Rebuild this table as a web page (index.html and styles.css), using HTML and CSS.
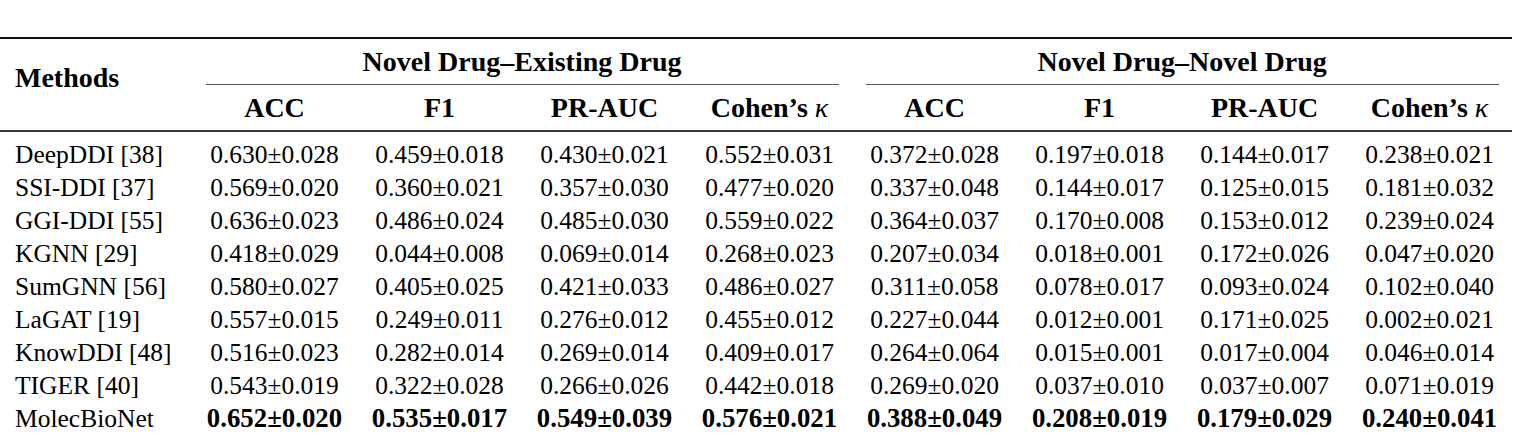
FILE: index.html
```html
<!DOCTYPE html>
<html lang="en">
<head>
<meta charset="utf-8">
<title>Results table</title>
<link rel="stylesheet" href="styles.css">
</head>
<body>
<div class="table-wrap">
<table class="results">
  <colgroup>
    <col class="col-method">
    <col class="col-num"><col class="col-num"><col class="col-num"><col class="col-num">
    <col class="col-num"><col class="col-num"><col class="col-num"><col class="col-num">
  </colgroup>
  <thead>
    <tr class="group-row">
      <th class="methods" rowspan="2">Methods</th>
      <th class="group" colspan="4"><div class="group-label">Novel Drug–Existing Drug</div></th>
      <th class="group" colspan="4"><div class="group-label">Novel Drug–Novel Drug</div></th>
    </tr>
    <tr class="metric-row">
      <th>ACC</th><th>F1</th><th>PR-AUC</th><th>Cohen’s <span class="kappa">κ</span></th>
      <th>ACC</th><th>F1</th><th>PR-AUC</th><th>Cohen’s <span class="kappa">κ</span></th>
    </tr>
  </thead>
  <tbody>
    <tr><td class="name">DeepDDI [38]</td><td>0.630±0.028</td><td>0.459±0.018</td><td>0.430±0.021</td><td>0.552±0.031</td><td>0.372±0.028</td><td>0.197±0.018</td><td>0.144±0.017</td><td>0.238±0.021</td></tr>
    <tr><td class="name">SSI-DDI [37]</td><td>0.569±0.020</td><td>0.360±0.021</td><td>0.357±0.030</td><td>0.477±0.020</td><td>0.337±0.048</td><td>0.144±0.017</td><td>0.125±0.015</td><td>0.181±0.032</td></tr>
    <tr><td class="name">GGI-DDI [55]</td><td>0.636±0.023</td><td>0.486±0.024</td><td>0.485±0.030</td><td>0.559±0.022</td><td>0.364±0.037</td><td>0.170±0.008</td><td>0.153±0.012</td><td>0.239±0.024</td></tr>
    <tr><td class="name">KGNN [29]</td><td>0.418±0.029</td><td>0.044±0.008</td><td>0.069±0.014</td><td>0.268±0.023</td><td>0.207±0.034</td><td>0.018±0.001</td><td>0.172±0.026</td><td>0.047±0.020</td></tr>
    <tr><td class="name">SumGNN [56]</td><td>0.580±0.027</td><td>0.405±0.025</td><td>0.421±0.033</td><td>0.486±0.027</td><td>0.311±0.058</td><td>0.078±0.017</td><td>0.093±0.024</td><td>0.102±0.040</td></tr>
    <tr><td class="name">LaGAT [19]</td><td>0.557±0.015</td><td>0.249±0.011</td><td>0.276±0.012</td><td>0.455±0.012</td><td>0.227±0.044</td><td>0.012±0.001</td><td>0.171±0.025</td><td>0.002±0.021</td></tr>
    <tr><td class="name">KnowDDI [48]</td><td>0.516±0.023</td><td>0.282±0.014</td><td>0.269±0.014</td><td>0.409±0.017</td><td>0.264±0.064</td><td>0.015±0.001</td><td>0.017±0.004</td><td>0.046±0.014</td></tr>
    <tr><td class="name">TIGER [40]</td><td>0.543±0.019</td><td>0.322±0.028</td><td>0.266±0.026</td><td>0.442±0.018</td><td>0.269±0.020</td><td>0.037±0.010</td><td>0.037±0.007</td><td>0.071±0.019</td></tr>
    <tr class="best"><td class="name">MolecBioNet</td><td>0.652±0.020</td><td>0.535±0.017</td><td>0.549±0.039</td><td>0.576±0.021</td><td>0.388±0.049</td><td>0.208±0.019</td><td>0.179±0.029</td><td>0.240±0.041</td></tr>
  </tbody>
</table>
</div>
</body>
</html>
```
FILE: styles.css
```css
html, body {
  margin: 0;
  padding: 0;
  background: #ffffff;
}

body {
  font-family: "Liberation Serif", "Times New Roman", serif;
  color: #000000;
}

.table-wrap {
  width: 1512px;
  margin-top: 37px;
  border-top: 2px solid #111111;
}

.results {
  width: 1512px;
  border-collapse: collapse;
  table-layout: fixed;
}

.col-method { width: 192px; }
.col-num { width: 165px; }

.results th {
  font-weight: bold;
  font-size: 28px;
  padding: 0;
  text-align: center;
  white-space: nowrap;
}

.results th.methods {
  text-align: left;
  padding-left: 15px;
  padding-bottom: 14px;
  vertical-align: middle;
  border-bottom: 2px solid #3a3a3a;
}

.results th.group {
  padding: 0 13.5px;
  height: 46px;
  vertical-align: top;
}

.group-label {
  height: 45px;
  line-height: 45px;
  border-bottom: 1px solid #555555;
}

.metric-row th {
  height: 45px;
  line-height: 45px;
  border-bottom: 2px solid #3a3a3a;
}

.kappa {
  font-style: italic;
  font-weight: normal;
}

.results td {
  font-size: 25.5px;
  height: 33px;
  line-height: 33px;
  padding: 0;
  text-align: center;
  white-space: nowrap;
}

.results td.name {
  text-align: left;
  padding-left: 15px;
}

.results tbody tr:first-child td {
  padding-top: 6px;
}

.best td {
  font-weight: bold;
  font-size: 26.8px;
}

.best td.name {
  font-weight: normal;
  font-size: 25.5px;
}
```
